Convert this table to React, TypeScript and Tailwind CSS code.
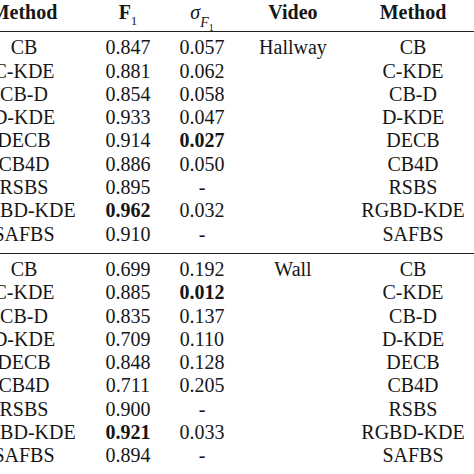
import React from "react";

type Row = { method: string; f1: string; sd: string; f1Bold?: boolean; sdBold?: boolean };

const METHODS = ["CB", "C-KDE", "CB-D", "D-KDE", "DECB", "CB4D", "RSBS", "RGBD-KDE", "SAFBS"];

const SECTIONS: { video: string; rows: Row[] }[] = [
  {
    video: "Hallway",
    rows: [
      { method: "CB", f1: "0.847", sd: "0.057" },
      { method: "C-KDE", f1: "0.881", sd: "0.062" },
      { method: "CB-D", f1: "0.854", sd: "0.058" },
      { method: "D-KDE", f1: "0.933", sd: "0.047" },
      { method: "DECB", f1: "0.914", sd: "0.027", sdBold: true },
      { method: "CB4D", f1: "0.886", sd: "0.050" },
      { method: "RSBS", f1: "0.895", sd: "-" },
      { method: "RGBD-KDE", f1: "0.962", sd: "0.032", f1Bold: true },
      { method: "SAFBS", f1: "0.910", sd: "-" },
    ],
  },
  {
    video: "Wall",
    rows: [
      { method: "CB", f1: "0.699", sd: "0.192" },
      { method: "C-KDE", f1: "0.885", sd: "0.012", sdBold: true },
      { method: "CB-D", f1: "0.835", sd: "0.137" },
      { method: "D-KDE", f1: "0.709", sd: "0.110" },
      { method: "DECB", f1: "0.848", sd: "0.128" },
      { method: "CB4D", f1: "0.711", sd: "0.205" },
      { method: "RSBS", f1: "0.900", sd: "-" },
      { method: "RGBD-KDE", f1: "0.921", sd: "0.033", f1Bold: true },
      { method: "SAFBS", f1: "0.894", sd: "-" },
    ],
  },
];

const COLS = "grid grid-cols-[128px_80px_68px_114px_126px]";

export default function App() {
  return (
    <div className="w-[474px] h-[474px] overflow-hidden bg-white text-[#161616] font-['Liberation_Serif',serif] text-[20px] leading-[23.3px]">
      <div className="w-[516px] ml-[-40px]">
        {/* Header */}
        <div className={`${COLS} pt-[1px] pb-[7px] border-b-[1.5px] border-[#222] font-bold text-center`}>
          <div>Method</div>
          <div>
            F<sub className="text-[13px] font-normal align-[-3px]">1</sub>
          </div>
          <div className="font-normal italic">
            σ<sub className="text-[14px] align-[-4px]">
              F<sub className="text-[10px] not-italic align-[-2px]">1</sub>
            </sub>
          </div>
          <div>Video</div>
          <div>Method</div>
        </div>

        {SECTIONS.map((section, si) => (
          <div
            key={section.video}
            className={`pt-[4px] pb-[7px] ${si === 0 ? "border-b border-[#222]" : ""}`}
          >
            {section.rows.map((row, i) => (
              <div key={row.method} className={`${COLS} text-center`}>
                <div className="whitespace-nowrap">{row.method}</div>
                <div className={row.f1Bold ? "font-bold" : ""}>{row.f1}</div>
                <div className={row.sdBold ? "font-bold" : ""}>{row.sd}</div>
                <div>{i === 0 ? section.video : ""}</div>
                <div className="whitespace-nowrap">{METHODS[i]}</div>
              </div>
            ))}
          </div>
        ))}
      </div>
    </div>
  );
}
